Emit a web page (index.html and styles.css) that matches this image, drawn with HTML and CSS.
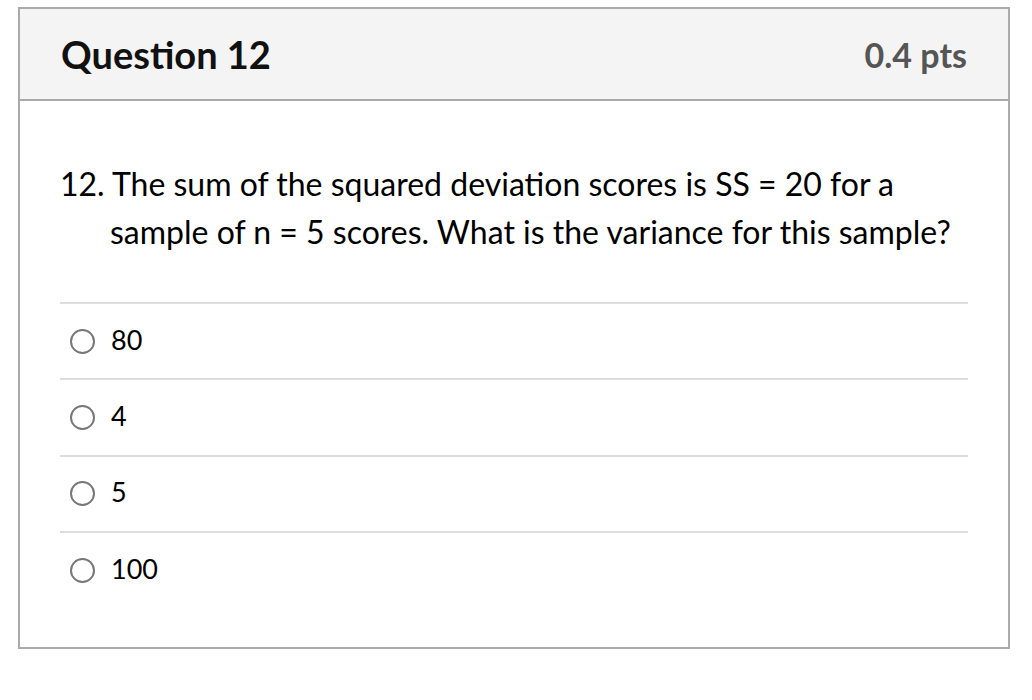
FILE: index.html
```html
<!DOCTYPE html>
<html>
<head>
<meta charset="utf-8">
<link rel="stylesheet" href="styles.css">
</head>
<body>
<div class="question">
  <div class="q-header">
    <div class="q-title">Question 12</div>
    <div class="q-points">0.4 pts</div>
  </div>
  <div class="q-body">
    <p class="q-text">12. The sum of the squared deviation scores is SS = 20 for a sample of n = 5 scores. What is the variance for this sample?</p>
    <div class="answers">
      <label class="answer"><span class="radio"></span><span class="answer-text">80</span></label>
      <label class="answer"><span class="radio"></span><span class="answer-text">4</span></label>
      <label class="answer"><span class="radio"></span><span class="answer-text">5</span></label>
      <label class="answer"><span class="radio"></span><span class="answer-text">100</span></label>
    </div>
  </div>
</div>
</body>
</html>
```

FILE: styles.css
```css
html, body {
  margin: 0;
  padding: 0;
  background: #fff;
}
body {
  font-family: Lato, "Liberation Sans", sans-serif;
  color: #000;
}
.question {
  margin: 7px 0 0 18px;
  width: 988px;
  border: 2px solid #aaa;
}
.q-header {
  height: 90px;
  background: #f4f4f4;
  border-bottom: 2px solid #aaa;
  display: flex;
  align-items: center;
  justify-content: space-between;
  padding: 0 41px 0 41px;
}
.q-title {
  font-size: 38px;
  font-weight: 700;
  color: #111;
}
.q-points {
  font-size: 34px;
  font-weight: 700;
  color: #555;
}
.q-body {
  padding: 59px 40px 39px 40px;
}
.q-text {
  margin: 0 0 46px 0;
  font-size: 32px;
  line-height: 48px;
  padding-left: 50px;
  text-indent: -50px;
}
.answers {
  display: flex;
  flex-direction: column;
}
.answer {
  display: flex;
  align-items: center;
  height: 74.4px;
  border-top: 2px solid #ddd;
  padding-left: 10px;
}
.radio {
  width: 21px;
  height: 21px;
  border: 2px solid #777;
  border-radius: 50%;
  flex: none;
}
.answer-text {
  margin-left: 16px;
  font-size: 27px;
  padding-bottom: 4px;
}
```
